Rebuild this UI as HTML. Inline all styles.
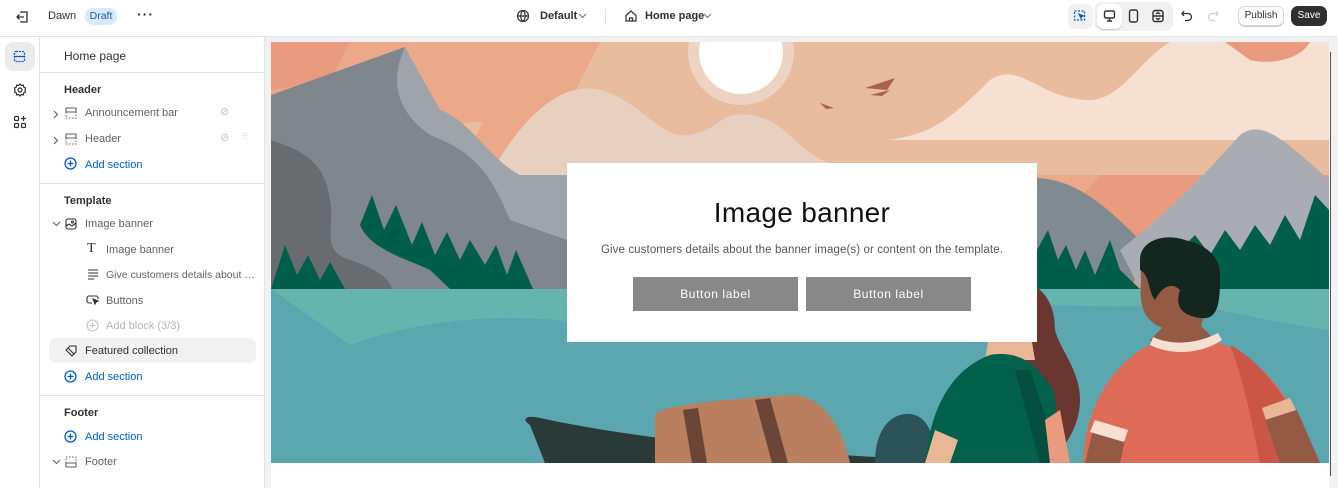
<!DOCTYPE html>
<html><head><meta charset="utf-8"><style>
*{box-sizing:border-box;margin:0;padding:0}
body{width:1338px;height:488px;overflow:hidden;background:#fff;font-family:"Liberation Sans",sans-serif;position:relative;color:#303030}
.abs{position:absolute}
.top{left:0;top:0;width:1338px;height:37px;border-bottom:1px solid #e3e3e3;background:#fff}
.t{position:absolute;font-size:11px;white-space:nowrap}
.rail{left:0;top:37px;width:40px;height:451px;border-right:1px solid #e3e3e3;background:#fff}
.panel{left:40px;top:37px;width:225px;height:451px;border-right:1px solid #e3e3e3;background:#fff;overflow:hidden}
.hr{position:absolute;left:0;width:224px;height:1px;background:#e3e3e3}
.blue{color:#005bd3}
.gray{color:#616161}
</style></head><body>
<div class="abs top">
  <svg class="abs" style="left:14px;top:9px" width="16" height="16" viewBox="0 0 16 16" fill="none" stroke="#303030" stroke-width="1.3"><path d="M7 4V3h6v10H7v-1"/><path d="M10 8H3M5.5 5.5L3 8l2.5 2.5"/></svg>
  <div class="t" style="left:48px;top:10px;color:#303030">Dawn</div>
  <div class="abs" style="left:85px;top:8px;width:32px;height:17px;border-radius:8px;background:#d8eaf9;font-size:10.5px;color:#1f5d99;text-align:center;line-height:17px">Draft</div>
  <div class="t" style="left:137px;top:6px;font-size:14px;font-weight:bold;letter-spacing:1px">···</div>
  <svg class="abs" style="left:516px;top:9px" width="14" height="14" viewBox="0 0 14 14" fill="none" stroke="#303030" stroke-width="1.2"><circle cx="7" cy="7" r="5.5"/><path d="M1.5 7h11M7 1.5c-3 3-3 8 0 11M7 1.5c3 3 3 8 0 11"/></svg>
  <div class="t" style="left:540px;top:10px;font-weight:bold;color:#303030">Default</div>
  <svg class="abs" style="left:578px;top:13px" width="9" height="6" viewBox="0 0 9 6" fill="none" stroke="#777" stroke-width="1.1"><path d="M1 1l3.5 3.5L8 1"/></svg>
  <div class="abs" style="left:605px;top:9px;width:1px;height:16px;background:#e3e3e3"></div>
  <svg class="abs" style="left:624px;top:9px" width="14" height="14" viewBox="0 0 14 14" fill="none" stroke="#303030" stroke-width="1.2"><path d="M2 6.5L7 2l5 4.5V12H2z"/><path d="M5.5 12V9h3v3"/></svg>
  <div class="t" style="left:645px;top:10px;font-weight:bold;color:#303030">Home page</div>
  <svg class="abs" style="left:703px;top:13px" width="9" height="6" viewBox="0 0 9 6" fill="none" stroke="#777" stroke-width="1.1"><path d="M1 1l3.5 3.5L8 1"/></svg>
  <div class="abs" style="left:1068px;top:4px;width:25px;height:25px;border-radius:7px;background:#f1f1f1"></div>
  <svg class="abs" style="left:1073px;top:9px" width="14" height="14" viewBox="0 0 14 14" fill="none" stroke="#005bd3" stroke-width="1.3" stroke-dasharray="2 1.5"><rect x="1.5" y="2" width="10" height="9"/></svg>
  <svg class="abs" style="left:1078px;top:13px" width="8" height="8" viewBox="0 0 8 8"><path d="M0 0l7 3-3 1-1 3z" fill="#005bd3"/></svg>
  <div class="abs" style="left:1094px;top:2px;width:79px;height:29px;border-radius:8px;background:#f1f1f1"></div>
  <div class="abs" style="left:1097px;top:4px;width:25px;height:25px;border-radius:7px;background:#fff;box-shadow:0 1px 1px rgba(0,0,0,.2)"></div>
  <svg class="abs" style="left:1103px;top:10px" width="13" height="13" viewBox="0 0 13 13" fill="none" stroke="#303030" stroke-width="1.4"><rect x="1.5" y="1" width="10" height="7" rx="1.5"/><path d="M4 11h5M6.5 8v3"/></svg>
  <svg class="abs" style="left:1127px;top:9px" width="13" height="14" viewBox="0 0 13 14" fill="none" stroke="#303030" stroke-width="1.4"><rect x="2.5" y="1" width="8" height="12" rx="2"/></svg>
  <svg class="abs" style="left:1151px;top:9px" width="14" height="14" viewBox="0 0 14 14" fill="none" stroke="#303030" stroke-width="1.4"><rect x="2" y="1.5" width="10" height="11" rx="2"/><path d="M2 7h10M5 5l2-1.5L9 5M5 9l2 1.5L9 9"/></svg>
  <svg class="abs" style="left:1180px;top:9px" width="14" height="14" viewBox="0 0 14 14" fill="none" stroke="#303030" stroke-width="1.3"><path d="M4 2L2 4.5 4 7"/><path d="M2 4.5h6a3.5 3.5 0 010 7H5"/></svg>
  <svg class="abs" style="left:1206px;top:9px" width="14" height="14" viewBox="0 0 14 14" fill="none" stroke="#cfcfcf" stroke-width="1.3"><path d="M10 2l2 2.5L10 7"/><path d="M12 4.5H6a3.5 3.5 0 000 7h3"/></svg>
  <div class="abs" style="left:1238px;top:6px;width:46px;height:20px;border:1px solid #d4d4d4;border-radius:7px;font-size:10px;text-align:center;line-height:18px;color:#303030;box-shadow:0 1px 0 #ccc">Publish</div>
  <div class="abs" style="left:1291px;top:6px;width:36px;height:20px;border-radius:7px;background:#303030;color:#fff;font-size:10px;text-align:center;line-height:20px">Save</div>
</div>

<div class="abs rail">
  <div class="abs" style="left:5px;top:5px;width:30px;height:29px;border-radius:8px;background:#ebebeb"></div>
  <svg class="abs" style="left:13px;top:13px" width="13" height="13" viewBox="0 0 13 13" fill="none" stroke="#005bd3" stroke-width="1.3"><rect x="1.5" y="1.5" width="10" height="10" rx="1.5" stroke-dasharray="2 1"/><path d="M1.5 6.5h10"/></svg>
  <svg class="abs" style="left:13px;top:46px" width="14" height="14" viewBox="0 0 14 14" fill="none" stroke="#303030" stroke-width="1.2"><circle cx="7" cy="7" r="2"/><path d="M7 1l1.3 1.5 2-.4.4 2L12.5 5 12 7l.5 2-1.8.9-.4 2-2-.4L7 13l-1.3-1.5-2 .4-.4-2L1.5 9 2 7l-.5-2 1.8-.9.4-2 2 .4z"/></svg>
  <svg class="abs" style="left:13px;top:78px" width="14" height="14" viewBox="0 0 14 14" fill="none" stroke="#303030" stroke-width="1.2"><rect x="1.5" y="1.5" width="4" height="4" rx="1"/><rect x="1.5" y="8.5" width="4" height="4" rx="1"/><rect x="8.5" y="8.5" width="4" height="4" rx="1"/><path d="M10.5 1v5M8 3.5h5"/></svg>
</div>

<div class="abs panel">
  <div class="t" style="left:24px;top:12px;font-size:12px;color:#303030">Home page</div>
  <div class="hr" style="top:35px"></div>
  <div class="t" style="left:24px;top:47px;font-size:11px;font-weight:bold;color:#303030">Header</div>
  <svg class="abs" style="left:13px;top:73px" width="6" height="9" viewBox="0 0 6 9" fill="none" stroke="#616161" stroke-width="1.1"><path d="M1 1l3.5 3.5L1 8"/></svg>
  <svg class="abs" style="left:25px;top:70px" width="12" height="12" viewBox="0 0 12 12" fill="none" stroke="#616161" stroke-width="1.1"><path d="M1 1h10v4H1z"/><path d="M1 5v6h10V5" stroke-dasharray="1.5 1.5"/></svg>
  <div class="t gray" style="left:45px;top:70px">Announcement bar</div>
  <div class="t" style="left:180px;top:68px;color:#c4c4c4;font-size:11px">⊘</div>
  <svg class="abs" style="left:13px;top:99px" width="6" height="9" viewBox="0 0 6 9" fill="none" stroke="#616161" stroke-width="1.1"><path d="M1 1l3.5 3.5L1 8"/></svg>
  <svg class="abs" style="left:25px;top:96px" width="12" height="12" viewBox="0 0 12 12" fill="none" stroke="#616161" stroke-width="1.1"><path d="M1 1h10v4H1z"/><path d="M1 5v6h10V5" stroke-dasharray="1.5 1.5"/></svg>
  <div class="t gray" style="left:45px;top:96px">Header</div>
  <div class="t" style="left:180px;top:94px;color:#c4c4c4;font-size:11px">⊘</div>
  <div class="t" style="left:202px;top:95px;color:#d8d8d8;font-size:8px">⠿</div>
  <svg class="abs" style="left:24px;top:120px" width="13" height="13" viewBox="0 0 13 13" fill="none" stroke="#005bd3" stroke-width="1.3"><circle cx="6.5" cy="6.5" r="5.5"/><path d="M6.5 3.5v6M3.5 6.5h6"/></svg>
  <div class="t blue" style="left:45px;top:122px">Add section</div>
  <div class="hr" style="top:146px"></div>
  <div class="t" style="left:24px;top:158px;font-weight:bold;color:#303030">Template</div>
  <svg class="abs" style="left:12px;top:184px" width="9" height="6" viewBox="0 0 9 6" fill="none" stroke="#616161" stroke-width="1.1"><path d="M1 1l3.5 3.5L8 1"/></svg>
  <svg class="abs" style="left:25px;top:181px" width="12" height="12" viewBox="0 0 12 12" fill="none" stroke="#303030" stroke-width="1.1"><rect x="1" y="1" width="10" height="10" rx="2"/><path d="M1 8l3-2 3 2 4-3"/><circle cx="7.5" cy="4" r="1"/></svg>
  <div class="t gray" style="left:45px;top:181px">Image banner</div>
  <div class="t" style="left:47px;top:204px;font-family:'Liberation Serif',serif;font-size:14px;color:#303030">T</div>
  <div class="t gray" style="left:66px;top:207px">Image banner</div>
  <svg class="abs" style="left:47px;top:232px" width="12" height="11" viewBox="0 0 12 11" stroke="#303030" stroke-width="1.1"><path d="M1 1h10M1 4h10M1 7h10M1 10h6"/></svg>
  <div class="t gray" style="left:66px;top:232px;font-size:10.5px;width:150px;overflow:hidden;text-overflow:ellipsis">Give customers details about the banner</div>
  <svg class="abs" style="left:46px;top:257px" width="13" height="12" viewBox="0 0 13 12" fill="none" stroke="#303030" stroke-width="1.1"><path d="M6 9H3a2 2 0 01-2-2V4a2 2 0 012-2h7a2 2 0 012 2v1"/><path d="M7 5l5 2-2 1-1 2z" fill="#303030"/></svg>
  <div class="t gray" style="left:66px;top:258px">Buttons</div>
  <svg class="abs" style="left:46px;top:282px" width="13" height="13" viewBox="0 0 13 13" fill="none" stroke="#c4c4c4" stroke-width="1.1"><circle cx="6.5" cy="6.5" r="5.5"/><path d="M6.5 3.5v6M3.5 6.5h6"/></svg>
  <div class="t" style="left:66px;top:283px;color:#b5b5b5">Add block (3/3)</div>
  <div class="abs" style="left:9px;top:301px;width:207px;height:25px;border-radius:7px;background:#f1f1f1"></div>
  <svg class="abs" style="left:25px;top:308px" width="13" height="12" viewBox="0 0 13 12" fill="none" stroke="#303030" stroke-width="1.1"><path d="M1 5l4-4h6v6l-4 4z"/><path d="M3 3l6 6"/></svg>
  <div class="t" style="left:45px;top:308px;color:#303030">Featured collection</div>
  <svg class="abs" style="left:24px;top:333px" width="13" height="13" viewBox="0 0 13 13" fill="none" stroke="#005bd3" stroke-width="1.3"><circle cx="6.5" cy="6.5" r="5.5"/><path d="M6.5 3.5v6M3.5 6.5h6"/></svg>
  <div class="t blue" style="left:45px;top:334px">Add section</div>
  <div class="hr" style="top:358px"></div>
  <div class="t" style="left:24px;top:370px;font-weight:bold;color:#303030">Footer</div>
  <svg class="abs" style="left:24px;top:393px" width="13" height="13" viewBox="0 0 13 13" fill="none" stroke="#005bd3" stroke-width="1.3"><circle cx="6.5" cy="6.5" r="5.5"/><path d="M6.5 3.5v6M3.5 6.5h6"/></svg>
  <div class="t blue" style="left:45px;top:394px">Add section</div>
  <svg class="abs" style="left:12px;top:422px" width="9" height="6" viewBox="0 0 9 6" fill="none" stroke="#616161" stroke-width="1.1"><path d="M1 1l3.5 3.5L8 1"/></svg>
  <svg class="abs" style="left:25px;top:419px" width="12" height="12" viewBox="0 0 12 12" fill="none" stroke="#616161" stroke-width="1.1"><path d="M1 7h10v4H1z"/><path d="M1 7V1h10v6" stroke-dasharray="1.5 1.5"/></svg>
  <div class="t gray" style="left:45px;top:419px">Footer</div>
</div>

<div class="abs" style="left:265px;top:37px;width:1073px;height:451px;background:#f1f1f1"></div>
<div class="abs" style="left:271px;top:42px;width:1058px;height:446px;background:#fff"></div>
<div class="abs" style="left:1330px;top:52px;width:1px;height:424px;background:#555"></div>

<svg class="abs" style="left:271px;top:42px" width="1058" height="421" viewBox="271 42 1058 421">
  <rect x="271" y="42" width="1058" height="421" fill="#e8bc9c"/>
  <path d="M271 42H530L500 120 271 140z" fill="#eba98a"/>
  <path d="M271 42H350L330 80 271 90z" fill="#e99b7f"/>
  <path d="M530 42H600L520 200 450 180z" fill="#eba98a"/>
  <circle cx="741" cy="52" r="53" fill="#ecd3c2"/>
  <circle cx="741" cy="52" r="42" fill="#fff"/>
  <path d="M490 175C520 120 560 80 600 90C640 100 660 140 690 135C720 130 720 110 750 115C790 120 800 160 840 165L860 170V175z" fill="#e8d0c0"/>
  <path d="M950 42H1329V140H887C930 135 950 120 990 80C1020 60 1040 100 1090 100C1120 100 1140 60 1170 42z" fill="#f5e0d2"/>
  <path d="M1225 42H1310C1300 60 1270 65 1250 60z" fill="#e99b7f"/>
  <path d="M860 175H1329V289H860z" fill="#eba98a"/>
  <path d="M1000 175H1329V289H1000C1040 240 1080 200 1100 175z" fill="#e99b7f"/>
  <path d="M820 103l14 5-8 1zM870 95l20-5-8 6zM865 88l30-10-8 12z" fill="#a9604f"/>
  <path d="M271 95L405 47 440 110C470 120 490 160 520 175L567 175V289H271z" fill="#9fa4aa"/>
  <path d="M271 95L405 47C390 80 395 110 430 135C470 150 490 170 510 220L567 240V289H271z" fill="#7f868c"/>
  <path d="M271 140C300 150 325 160 330 200C335 230 320 250 350 260C380 270 390 280 392 289H271z" fill="#686c6f"/>
  <path d="M360 225L372 195 384 230 396 205 412 245 422 222 435 255 447 232 460 260 470 240 485 265 496 245 507 275 516 250 533 289H450L430 270C410 260 370 250 360 225z" fill="#005e4a"/>
  <path d="M271 289L285 245 297 275 308 255 320 280 330 262 345 289z" fill="#005e4a"/>
  <path d="M1037 178C1080 180 1110 210 1150 250L1130 289H1037z" fill="#818a90"/>
  <path d="M1120 250C1170 210 1200 180 1240 135 1260 120 1280 135 1329 180V289H1140z" fill="#a9adb3"/>
  <path d="M1037 289V250L1048 230 1058 260 1066 245 1076 270 1085 250 1095 275 1110 240 1120 270 1140 289z" fill="#005e4a"/>
  <path d="M1140 289L1180 250 1195 235 1210 255 1225 230 1240 250 1255 225 1270 245 1285 215 1300 240 1315 195 1329 210V289z" fill="#005e4a"/>
  <rect x="271" y="289" width="1058" height="174" fill="#5aa7b0"/>
  <path d="M271 289H1329V330C1250 320 1200 300 1150 305 1100 310 1050 300 1000 310 900 330 700 340 600 325 500 310 420 320 350 345 300 360 271 350z" fill="#66b4ae"/>
  <path d="M530 425C520 418 528 415 540 418 640 440 800 455 940 460V463H545z" fill="#2a3a38"/>
  <path d="M655 415C660 405 720 400 790 395 820 395 840 420 850 463H655z" fill="#b97f5e"/>
  <path d="M683 410L698 408 707 463H692zM755 400L770 398 788 463H772z" fill="#6b4636"/>
  <path d="M875 463C875 420 900 410 915 415 930 420 935 440 935 463z" fill="#2c5359"/>
  <path d="M1010 280C1040 280 1055 300 1055 330 1060 350 1080 370 1080 400 1080 420 1070 440 1060 450L1020 400z" fill="#6b3630"/>
  <path d="M990 330H1030L1035 360H985z" fill="#e8b796"/>
  <path d="M925 463C930 410 950 370 990 355 1020 350 1040 365 1055 395L1060 463z" fill="#02614b"/>
  <path d="M1030 370L1060 463H1040L1015 370z" fill="#034e3f"/>
  <path d="M925 463L935 430 958 440 950 463z" fill="#e8b796"/>
  <path d="M1050 463L1045 420 1060 410 1070 463z" fill="#e99b7f"/>
  <path d="M1083 463C1085 410 1110 360 1160 340 1210 330 1250 350 1280 390 1300 420 1315 450 1320 463z" fill="#de6b58"/>
  <path d="M1230 345C1260 360 1290 400 1305 440L1320 463H1260C1250 410 1240 370 1230 345z" fill="#cb5646"/>
  <path d="M1093 430L1125 440 1120 463H1085z" fill="#955a44"/>
  <path d="M1095 420L1128 430 1124 442 1090 432z" fill="#f5e0d2"/>
  <path d="M1262 408L1290 398 1296 410 1266 420z" fill="#e8b796"/>
  <path d="M1265 420L1297 410 1320 463H1280z" fill="#955a44"/>
  <path d="M1150 340L1170 320 1200 325 1215 340C1200 350 1170 355 1150 340z" fill="#955a44"/>
  <path d="M1150 345C1170 355 1200 355 1222 340L1218 333C1195 345 1170 345 1153 337z" fill="#f5e0d2"/>
  <path d="M1141 280C1138 250 1160 240 1190 250 1210 260 1210 300 1200 330 1180 335 1160 330 1150 320 1140 310 1140 295 1141 280z" fill="#955a44"/>
  <path d="M1140 260C1140 240 1165 233 1185 240 1205 245 1222 255 1220 280 1220 310 1215 320 1200 318 1180 315 1175 305 1180 290 1170 280 1160 290 1155 300 1148 292 1150 275 1140 270z" fill="#13261f"/>
</svg>

<div class="abs" style="left:567px;top:163px;width:470px;height:179px;background:#fff"></div>
<div class="abs" style="left:567px;top:197px;width:470px;text-align:center;font-size:28px;color:#121212;letter-spacing:.3px">Image banner</div>
<div class="abs" style="left:567px;top:244px;width:470px;text-align:center;font-size:11.5px;color:#555;letter-spacing:.1px">Give customers details about the banner image(s) or content on the template.</div>
<div class="abs" style="left:633px;top:277px;width:165px;height:34px;background:#888;color:#fff;font-size:12px;text-align:center;line-height:34px;letter-spacing:.6px">Button label</div>
<div class="abs" style="left:806px;top:277px;width:165px;height:34px;background:#888;color:#fff;font-size:12px;text-align:center;line-height:34px;letter-spacing:.6px">Button label</div>
</body></html>
